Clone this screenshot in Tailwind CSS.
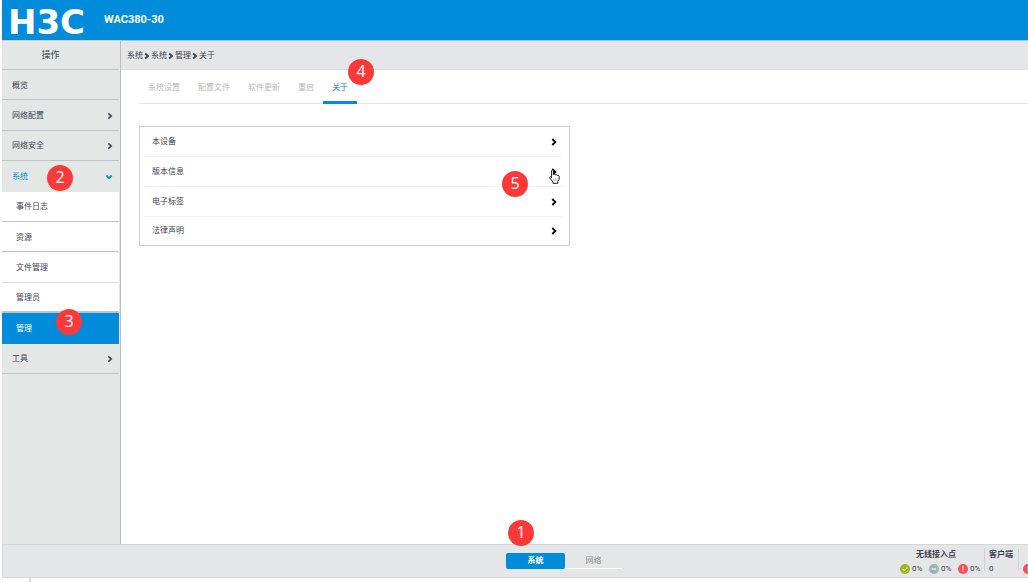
<!DOCTYPE html>
<html lang="zh-CN">
<head>
    <meta charset="UTF-8">
    <meta name="viewport" content="width=device-width, initial-scale=1.0">
    <title>WAC380-30</title>
    <script src="https://cdn.jsdelivr.net/npm/@tailwindcss/browser@4"></script>
</head>
<body class="bg-white font-['Liberation_Sans','Noto_Sans_CJK_SC',sans-serif] text-[8px] text-[#3f4350]">
<div class="relative flex flex-col h-screen pl-0.5 overflow-hidden">

    <!-- Header -->
    <header class="shrink-0 flex items-center h-10 bg-[#008cdb] text-white">
        <h1 class="w-[102px] pl-1.5 pt-1 font-['DejaVu_Sans',sans-serif] text-[34px] leading-9 font-bold">H3C</h1>
        <span class="font-['Roboto',sans-serif] text-[11px] font-bold">WAC380-30</span>
    </header>

    <div class="flex flex-1 min-h-0">
        <!-- Sidebar -->
        <nav class="shrink-0 w-[119px] bg-[#e3e8e7] border-t border-r border-t-[#c9d3d6] border-r-[#b9bbbd] pr-px">
            <h2 class="h-[29px] flex items-center justify-center pt-0.5 pr-5 text-[9px] border-b border-[#bfc3c3]">操作</h2>
            <ul class="grid auto-rows-fr h-[304px]">
                <li class="border-b border-[#bfc3c3]"><a href="#" class="flex items-center h-full pt-0.5 px-2.5">概览</a></li>
                <li class="border-b border-[#bfc3c3]"><a href="#" class="flex items-center justify-between h-full pt-0.5 pl-2.5 pr-1.5">网络配置
                    <svg class="w-1.5 h-2" viewBox="0 0 6 8" fill="none" stroke="currentColor" stroke-width="1.6"><path d="M1.3 1.3 4.2 4 1.3 6.7"/></svg></a></li>
                <li class="border-b border-[#bfc3c3]"><a href="#" class="flex items-center justify-between h-full pt-0.5 pl-2.5 pr-1.5">网络安全
                    <svg class="w-1.5 h-2" viewBox="0 0 6 8" fill="none" stroke="currentColor" stroke-width="1.6"><path d="M1.3 1.3 4.2 4 1.3 6.7"/></svg></a></li>
                <li><a href="#" class="flex items-center justify-between h-full pt-0.5 pl-2.5 pr-1.5 text-[#0a8fd0]">系统
                    <svg class="w-2 h-1.5" viewBox="0 0 8 6" fill="none" stroke="currentColor" stroke-width="1.8"><path d="M1.3 1.5 4 4.2 6.7 1.5"/></svg></a></li>
                <li class="bg-white border-b border-[#bfc3c3]"><a href="#" class="flex items-center h-full pt-0.5 pl-3.5">事件日志</a></li>
                <li class="bg-white border-b border-[#bfc3c3]"><a href="#" class="flex items-center h-full pt-0.5 pl-3.5">资源</a></li>
                <li class="bg-white border-b border-[#d9dbdb]"><a href="#" class="flex items-center h-full pt-0.5 pl-3.5">文件管理</a></li>
                <li class="bg-white border-b-2 border-[#bfc3c3]"><a href="#" class="flex items-center h-full pt-0.5 pl-3.5">管理员</a></li>
                <li class="bg-[#008cdb] text-white"><a href="#" class="flex items-center h-full pt-0.5 pl-3.5">管理</a></li>
                <li class="border-b border-[#bfc3c3]"><a href="#" class="flex items-center justify-between h-full pt-0.5 pl-2.5 pr-1.5">工具
                    <svg class="w-1.5 h-2" viewBox="0 0 6 8" fill="none" stroke="currentColor" stroke-width="1.6"><path d="M1.3 1.3 4.2 4 1.3 6.7"/></svg></a></li>
            </ul>
        </nav>

        <!-- Content -->
        <main class="flex-1 min-w-0">
            <div class="flex items-center gap-px h-[30px] pt-0.5 pl-1.5 bg-[#e4e6e8] border-t border-b border-t-[#8fcdee] border-b-[#dcdddf]">
                <a href="#">系统</a>
                <svg class="w-1.5 h-2" viewBox="0 0 6 8" fill="none" stroke="currentColor" stroke-width="1.8"><path d="M1.2 1.5 4 4 1.2 6.5"/></svg>
                <a href="#">系统</a>
                <svg class="w-1.5 h-2" viewBox="0 0 6 8" fill="none" stroke="currentColor" stroke-width="1.8"><path d="M1.2 1.5 4 4 1.2 6.5"/></svg>
                <a href="#">管理</a>
                <svg class="w-1.5 h-2" viewBox="0 0 6 8" fill="none" stroke="currentColor" stroke-width="1.8"><path d="M1.2 1.5 4 4 1.2 6.5"/></svg>
                <span>关于</span>
            </div>

            <!-- Tabs -->
            <div class="flex h-[34px] ml-[18px] border-b border-[#e6e6e6] text-[#b9b9b9]">
                <a href="#" class="flex items-center pt-0.5 px-[9px]">系统设置</a>
                <a href="#" class="flex items-center pt-0.5 px-[9px]">配置文件</a>
                <a href="#" class="flex items-center pt-0.5 px-[9px]">软件更新</a>
                <a href="#" class="flex items-center pt-0.5 px-[9px]">重启</a>
                <a href="#" class="flex items-center pt-1 px-[9px] -mb-px border-b-3 border-[#008cdb] text-[#1a7fa8]">关于</a>
            </div>

            <!-- Accordion -->
            <ul class="w-[431px] ml-[18px] mt-[22px] pr-1.5 pl-1 border border-[#cfcfcf]">
                <li class="h-[30px] border-b border-[#f3f3f3]"><button class="flex items-center justify-between w-full h-full pl-2 pr-1.5">本设备
                    <svg class="w-1.5 h-2 text-black" viewBox="0 0 6 8" fill="none" stroke="currentColor" stroke-width="1.8"><path d="M1.3 1 4.4 4 1.3 7"/></svg></button></li>
                <li class="relative h-[30px] border-b border-[#f3f3f3]"><button class="flex items-center justify-between w-full h-full pl-2 pr-1.5 cursor-pointer">版本信息
                    <svg class="w-1.5 h-2 text-black" viewBox="0 0 6 8" fill="none" stroke="currentColor" stroke-width="1.8"><path d="M1.3 1 4.4 4 1.3 7"/></svg></button>
                    <!-- hand pointer -->
                    <svg class="absolute right-[3px] top-3 w-[11px] h-[15px]" viewBox="0 0 11 15"><path d="M2.6 1.5Q3.5.4 4.4 1.5V5.4L5.8 5.2 6.4 5.9 7.7 5.7 8.3 6.5 9.5 6.5Q10.4 7 10.3 8.2L9.9 11 8.8 12.6V14.3H4V13L.9 9.2Q.3 8.1 1.3 7.8L2.6 8.7Z" fill="#fff" stroke="#000" stroke-width=".9"/><path d="M4.9 9.5v2.5M6.5 9.5v2.5M8 9.5v2.5" stroke="#777" stroke-width=".5"/></svg></li>
                <li class="h-[30px] border-b border-[#f3f3f3]"><button class="flex items-center justify-between w-full h-full pl-2 pr-1.5">电子标签
                    <svg class="w-1.5 h-2 text-black" viewBox="0 0 6 8" fill="none" stroke="currentColor" stroke-width="1.8"><path d="M1.3 1 4.4 4 1.3 7"/></svg></button></li>
                <li class="h-7"><button class="flex items-center justify-between w-full h-full pl-2 pr-1.5">法律声明
                    <svg class="w-1.5 h-2 text-black" viewBox="0 0 6 8" fill="none" stroke="currentColor" stroke-width="1.8"><path d="M1.3 1 4.4 4 1.3 7"/></svg></button></li>
            </ul>
        </main>
    </div>

    <!-- Status bar -->
    <footer class="shrink-0 flex h-[34px] bg-[#e4e6e8] border border-r-0 border-[#d4d6d8]">
        <div class="flex-1 flex items-center justify-end">
            <button class="w-[59px] h-4 rounded-xs bg-[#008cdb] text-white font-bold">系统</button>
            <button class="w-[57px] h-4 border-b border-white text-[#8b8d90]">网络</button>
        </div>
        <div class="w-[406px] flex justify-end pt-1 leading-3 overflow-hidden">
            <div class="w-[84px]">
                <h3 class="pl-4 font-bold">无线接入点</h3>
                <div class="flex items-center pt-0.5 font-['Roboto',sans-serif]">
                    <span class="flex items-center gap-0.5 w-[29px]">
                        <svg class="w-2.5 h-2.5" viewBox="0 0 10 10"><circle cx="5" cy="5" r="5" fill="#9fb914"/><path d="M2.8 5.1 4.4 6.6 7.3 3.6" fill="none" stroke="#fff" stroke-width="1.1"/></svg>0%</span>
                    <span class="flex items-center gap-0.5 w-[29px]">
                        <svg class="w-2.5 h-2.5" viewBox="0 0 10 10"><circle cx="5" cy="5" r="5" fill="#9fb1bb"/><path d="M2.7 5h4.6" stroke="#fff" stroke-width="1.1"/></svg>0%</span>
                    <span class="flex items-center gap-0.5">
                        <svg class="w-2.5 h-2.5" viewBox="0 0 10 10"><circle cx="5" cy="5" r="5" fill="#fb4b55"/><path d="M5 2.2v3.4M5 6.6v1.2" stroke="#fff" stroke-width="1.2"/></svg>0%</span>
                </div>
            </div>
            <div class="w-[35px] h-[22px] pl-1 border-x border-[#cfd1d4]">
                <h3 class="font-bold">客户端</h3>
                <p class="pt-0.5 font-['Roboto',sans-serif]">0</p>
            </div>
            <div class="w-[9px] pt-[15px] pl-1 overflow-hidden">
                <svg class="w-2.5 h-2.5 max-w-none" viewBox="0 0 10 10"><circle cx="5" cy="5" r="5" fill="#fb4b55"/><path d="M5 2.2v3.4M5 6.6v1.2" stroke="#fff" stroke-width="1.2"/></svg>
            </div>
        </div>
    </footer>
    <div class="shrink-0 w-[29px] h-1 border-r-2 border-[#d9dadc]"></div>

    <!-- Step markers -->
    <div class="font-['Open_Sans',sans-serif] text-[16px] leading-6 text-white text-center">
        <span class="absolute left-[508px] bottom-9 w-[26px] h-[26px] rounded-full bg-[#fc3939]">1</span>
        <span class="absolute left-[47px] top-[165px] w-[26px] h-[26px] rounded-full bg-[#fc3939]">2</span>
        <span class="absolute left-[56px] top-[309px] w-[26px] h-[26px] rounded-full bg-[#fc3939]">3</span>
        <span class="absolute left-[348px] top-[59px] w-[26px] h-[26px] rounded-full bg-[#fc3939]">4</span>
        <span class="absolute left-[502px] top-[171px] w-[26px] h-[26px] rounded-full bg-[#fc3939]">5</span>
    </div>
</div>
</body>
</html>
